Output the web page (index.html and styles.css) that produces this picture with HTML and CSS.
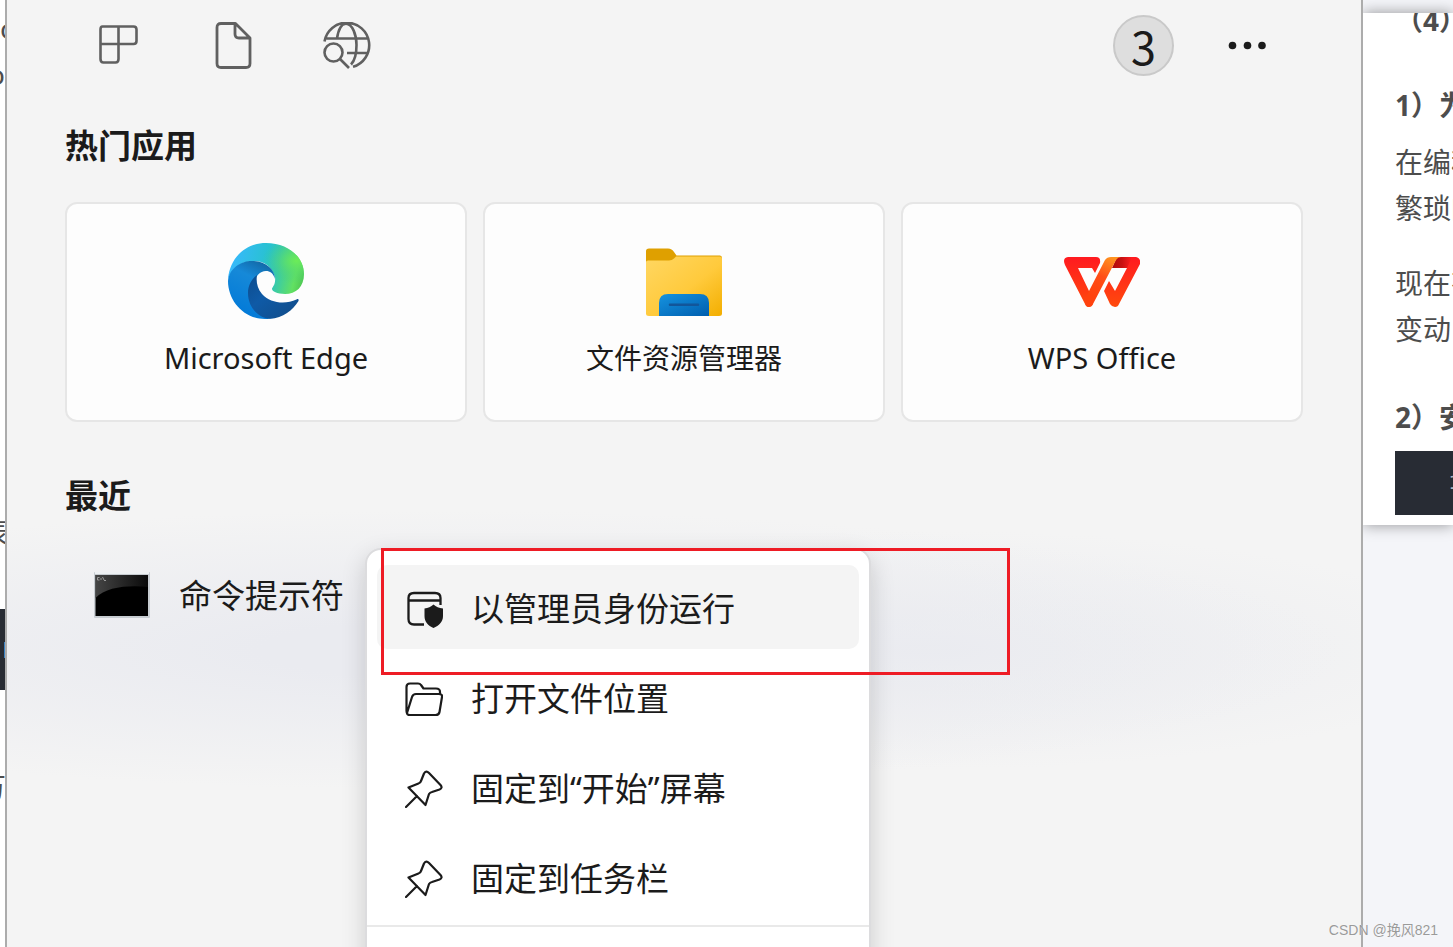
FILE: index.html
```html
<!DOCTYPE html>
<html lang="zh-CN">
<head>
<meta charset="utf-8">
<title>搜索</title>
<link rel="stylesheet" href="styles.css">
</head>
<body>
<div class="desktop">
  <aside class="back-left">
    <span class="frag frag-o">o</span>
    <span class="frag frag-p">o</span>
    <span class="frag frag-biao">表</span>
    <span class="frag-code"><i class="caret"></i></span>
    <span class="frag frag-wan">万</span>
  </aside>

  <main class="panel">
    <header class="topbar">
      <nav class="tabs">
        <button class="icon-btn" aria-label="应用">
          <svg width="48" height="48" viewBox="0 0 48 48" fill="none" stroke="#606060" stroke-width="2.6"><path d="M7.500 4.500H38.500Q41.500 4.500 41.500 7.500V19Q41.500 22 38.500 22H23.500V37Q23.500 40.500 20.500 40.500H8.500Q5.500 40.500 5.500 37V7.500Q5.500 4.500 7.500 4.500ZM23.500 4.500V22H5.500"/></svg>
        </button>
        <button class="icon-btn" aria-label="文档">
          <svg width="48" height="48" viewBox="0 0 48 48" fill="none" stroke="#606060" stroke-width="2.8" stroke-linejoin="round"><path d="M12 1.500H26.500L41 16V41.500Q41 45.500 37 45.500H12Q8 45.500 8 41.500V5.500Q8 1.500 12 1.500ZM26 1.500V12Q26 16 30 16H41"/></svg>
        </button>
        <button class="icon-btn" aria-label="网页">
          <svg width="48" height="48" viewBox="0 0 48 48" fill="none" stroke="#606060" stroke-width="2.6"><path d="M1.500 19.500A22.500 22.500 0 1 1 30 44.800M3.500 16.500H44.500M24 31H44.500M14 16.500C15.500 7 18.500 1.800 23 1.800C29.500 1.800 33.500 13 33.500 23C33.500 32 31.500 39 28 42.500"/><circle cx="10.500" cy="30.500" r="9"/><path d="M17 37L26 46"/></svg>
        </button>
      </nav>
      <div class="account">
        <button class="avatar">3</button>
        <button class="icon-btn" aria-label="更多">
          <svg width="48" height="48" viewBox="0 0 48 48" fill="#1b1b1b"><circle cx="8.500" cy="23.500" r="3.800"/><circle cx="23.500" cy="23.500" r="3.800"/><circle cx="38" cy="23.500" r="3.800"/></svg>
        </button>
      </div>
    </header>

    <h2 class="heading">热门应用</h2>
    <section class="cards">
      <button class="card latin">
        <svg width="76" height="76" viewBox="0 0 76 76">
          <defs>
            <linearGradient id="edgeTop" x1="0" y1=".4" x2="1" y2=".55"><stop offset="0" stop-color="#38b8ff"/><stop offset=".5" stop-color="#28c2cf"/><stop offset=".65" stop-color="#35c8b0"/><stop offset=".9" stop-color="#62e162"/><stop offset="1" stop-color="#52cc55"/></linearGradient>
            <linearGradient id="edgeMid" x1=".7" y1="0" x2=".3" y2="1"><stop offset="0" stop-color="#1268a6"/><stop offset=".3" stop-color="#1689d8"/><stop offset="1" stop-color="#0078d8"/></linearGradient>
            <linearGradient id="edgeLow" x1="0" y1="0" x2="1" y2="1"><stop offset="0" stop-color="#0d4c8d"/><stop offset=".4" stop-color="#0f5aa6"/><stop offset="1" stop-color="#114b87"/></linearGradient>
            <radialGradient id="edgeGreen" cx=".9" cy=".35" r=".45"><stop offset="0" stop-color="#6cec58"/><stop offset="1" stop-color="#45cc80" stop-opacity="0"/></radialGradient>
          </defs>
          <path fill="url(#edgeTop)" d="M0 36C2 14 18 0 38 0C60 0 76 14 76 31C76 44 68 51 57 51C49 51 44 48 44 46C44 44 48 42 47 34C44 22 34 17 24 18C12 19 4 26 0 36Z"/>
          <path fill="url(#edgeGreen)" d="M0 36C2 14 18 0 38 0C60 0 76 14 76 31C76 44 68 51 57 51C49 51 44 48 44 46C44 44 48 42 47 34C44 22 34 17 24 18C12 19 4 26 0 36Z"/>
          <path fill="url(#edgeMid)" d="M0 38C1 26 12 18 24 18C37 18 47 26 47 36C45 30 42 28 38 28C32 28 27 33 27 40C29 54 38 66 46 75C40 76 38 76 37 76C16 76 0 58 0 38Z"/>
          <path fill="url(#edgeLow)" d="M29 32C24 36 20 42 20 50C20 64 30 75 42 75.800C55 75 65 67 70.500 58C71 56 70 55.500 68.500 56.500C57 62 42 60 34 51C29 45 28 38 29 32Z"/>
        </svg>
        <span>Microsoft Edge</span>
      </button>
      <button class="card">
        <svg width="76" height="76" viewBox="0 0 76 76">
          <defs>
            <linearGradient id="folder" x1="0" y1="0" x2="1" y2="1"><stop offset="0" stop-color="#ffd762"/><stop offset=".55" stop-color="#ffca3c"/><stop offset="1" stop-color="#f3ae00"/></linearGradient>
            <linearGradient id="tray" x1="0" y1="0" x2="1" y2="1"><stop offset="0" stop-color="#1593e0"/><stop offset="1" stop-color="#005eae"/></linearGradient>
          </defs>
          <path fill="#dfa000" d="M0 8Q0 5.500 3 5.500H22Q26 5.500 28 9L30.500 12.500H74Q76 12.500 76 15V30H0Z"/>
          <path fill="url(#folder)" d="M0 19Q0 17.500 2 17.500H23Q26 17.500 28 15.500L30 13.500H74Q76 13.500 76 15.500V70.500Q76 73 73 73H3Q0 73 0 70.500Z"/>
          <path fill="url(#tray)" d="M13 73V60Q13 51 22 51H54Q63 51 63 60V73Z"/>
          <path stroke="#12569a" stroke-width="2.500" stroke-linecap="round" d="M24 61.700H52"/>
        </svg>
        <span>文件资源管理器</span>
      </button>
      <button class="card latin">
        <svg width="76" height="76" viewBox="0 0 76 76">
          <defs>
            <linearGradient id="wpsRed" x1="0" y1="0" x2="0" y2="1"><stop offset="0" stop-color="#ff1a20"/><stop offset="1" stop-color="#ff4a0c"/></linearGradient>
            <linearGradient id="wpsBand" gradientUnits="userSpaceOnUse" x1="48" y1="0" x2="30" y2="40"><stop offset="0" stop-color="#ff9420"/><stop offset=".5" stop-color="#ff4e16"/><stop offset="1" stop-color="#ff420e"/></linearGradient>
            <linearGradient id="wpsDark" x1="0" y1="0" x2="1" y2="0"><stop offset="0" stop-color="#ad0a0a"/><stop offset=".5" stop-color="#c81111"/><stop offset="1" stop-color="#ff1d20"/></linearGradient>
          </defs>
          <g transform="translate(0 14)">
            <path fill="url(#wpsRed)" d="M4 0H32Q37 0 36 6L31 16L28 11H14L25 34L29 47Q28 50 25 50Q22 50 21 47L1 8Q-2 1 4 0Z"/>
            <path fill="url(#wpsRed)" d="M55 0H72Q77 1 76 7L55 47Q54 50 51 50Q48 50 46 47L40 34L45 24L51 34L63 11H49Z"/>
            <path fill="url(#wpsDark)" d="M53 0H68L63 11H48Z"/>
            <path fill="url(#wpsBand)" d="M25 34L41 3Q43 0 47 0H57Q54 0 52 3L29 47Q27 50 25 50Q21 50 21 44Z"/>
          </g>
        </svg>
        <span>WPS Office</span>
      </button>
    </section>

    <h2 class="heading heading-recent">最近</h2>
    <section class="recent">
      <button class="recent-item">
        <svg width="56" height="48" viewBox="0 0 56 48">
          <defs><linearGradient id="shine" x1="0" y1="0" x2="1" y2="0"><stop offset="0" stop-color="#454545"/><stop offset="1" stop-color="#0a0a0a"/></linearGradient></defs>
          <rect x="0" y="0" width="56" height="46" rx="1" fill="#c7ccd1"/>
          <rect x="1" y="0" width="54" height="2" fill="#eef1f3"/>
          <rect x="1.500" y="3" width="52.500" height="41" fill="#000"/>
          <path fill="url(#shine)" d="M1.500 3H54V15C34 13 12 15 1.500 26Z"/>
          <path fill="none" stroke="#999" stroke-width="1" d="M5.500 5.500H3.500V8H5.500M7 6V8M8.500 5L10 8M10 8.500H12"/>
        </svg>
        <span>命令提示符</span>
      </button>

      <div class="menu" role="menu">
        <button class="menu-item active" role="menuitem">
          <svg width="38" height="38" viewBox="0 0 38 38" fill="none" stroke="#1b1b1b" stroke-width="2.300"><path d="M19 34.500H9Q3.500 34.500 3.500 29V8Q3.500 3 9 3H30Q35.500 3 35.500 8V15M3.500 10.500H35.500"/><path fill="#1b1b1b" stroke="none" d="M28.500 14.500C31 17 34 18 38 18.500V26C38 32 34 35.500 28.500 38C23 35.500 19.500 32 19.500 26V18.500C23 18 26 17 28.500 14.500Z"/></svg>
          <span>以管理员身份运行</span>
        </button>
        <button class="menu-item" role="menuitem">
          <svg width="38" height="38" viewBox="0 0 38 38" fill="none" stroke="#1b1b1b" stroke-width="2.200" stroke-linejoin="round"><path d="M2.500 34Q1.500 33 1.500 31V7Q1.500 3.500 5 3.500H13Q15 3.500 16 5L18.500 8.500H31Q35 8.500 35 12V14M2 33L7 17Q8 14 11 14H34Q37.500 14 37 17L34.500 32Q34 35 30.500 35H5Q2 35 2 33Z"/></svg>
          <span>打开文件位置</span>
        </button>
        <button class="menu-item" role="menuitem">
          <svg width="38" height="38" viewBox="0 0 38 38" fill="none" stroke="#1b1b1b" stroke-width="2.200" stroke-linejoin="round" stroke-linecap="round"><path d="M1 37L12 26M3.500 17.500L20.500 35L24 24Q25 22.500 27 22L34.500 19.500Q38 18 35.500 15L24 3Q21 0 19 3.500L16 11Q15.500 13 13.500 13.500Z"/></svg>
          <span>固定到“开始”屏幕</span>
        </button>
        <button class="menu-item" role="menuitem">
          <svg width="38" height="38" viewBox="0 0 38 38" fill="none" stroke="#1b1b1b" stroke-width="2.200" stroke-linejoin="round" stroke-linecap="round"><path d="M1 37L12 26M3.500 17.500L20.500 35L24 24Q25 22.500 27 22L34.500 19.500Q38 18 35.500 15L24 3Q21 0 19 3.500L16 11Q15.500 13 13.500 13.500Z"/></svg>
          <span>固定到任务栏</span>
        </button>
        <hr class="menu-line">
      </div>
      <div class="mark"></div>
    </section>
  </main>

  <aside class="back-right">
    <article class="article">
      <h3 class="art-first">（4）</h3>
      <h3>1）为</h3>
      <p>在编程</p>
      <p>繁琐的</p>
      <p class="para">现在有</p>
      <p>变动了</p>
      <h3 class="art-last">2）安</h3>
      <pre class="code">1</pre>
    </article>
  </aside>
  <div class="watermark">CSDN @挽风821</div>
</div>
</body>
</html>
```
FILE: styles.css
```css
* { box-sizing: border-box; }

body {
  margin: 0;
  font-family: "Noto Sans", "Noto Sans CJK SC", sans-serif;
  color: #1b1b1b;
}

button {
  font: inherit;
  color: inherit;
  background: none;
  border: 0;
  padding: 0;
}

svg { display: block; flex: none; }

.desktop {
  position: relative;
  display: flex;
  height: 100vh;
  overflow: hidden;
  background: #fff;
}

/* Window behind, left edge */
.back-left {
  display: flex;
  flex-direction: column;
  align-items: flex-end;
  flex: none;
  width: 5px;
  color: #4d4d4d;
  font-size: 28px;
  line-height: 40px;
}
.frag { white-space: nowrap; }
.frag-o { margin: 8px -12px 0 0; }
.frag-p { margin: 6px 0 0; }
.frag-biao { margin: 418px -3px 0 0; }
.frag-code {
  display: flex;
  justify-content: flex-end;
  align-items: center;
  width: 5px;
  height: 81px;
  margin-top: 57px;
  background: #282c34;
}
.caret { width: 1px; height: 16px; background: #3b82c4; }
.frag-wan { margin: 77px -1px 0 0; }

/* Search flyout */
.panel {
  position: relative;
  flex: 1;
  min-width: 0;
  padding: 15px 58px 0;
  border: solid #acacac;
  border-width: 0 2px;
  background:
    radial-gradient(ellipse 900px 140px at 32% 650px, #eaebf0 0%, #eaebf0 20%, rgba(234, 235, 240, 0) 100%),
    radial-gradient(ellipse 560px 120px at 68% 650px, #ebecf0 0%, rgba(235, 236, 240, 0) 100%),
    #f4f4f4;
}

.topbar {
  display: flex;
  justify-content: space-between;
  align-items: center;
  padding: 0 31px 0 30px;
}
.tabs { display: flex; gap: 66px; }
.account { display: flex; align-items: center; gap: 50px; }
.avatar {
  width: 61px;
  height: 61px;
  border: 2px solid #c9c9c9;
  border-radius: 50%;
  background: #dedede;
  font-size: 45px;
  line-height: 57px;
  font-family: "Noto Sans CJK SC", sans-serif;
}

.heading {
  margin: 48px 0 34px;
  font-size: 33px;
  line-height: 44px;
  font-weight: 700;
}
.heading-recent { margin: 52px 0 0; }

.cards {
  display: grid;
  grid-template-columns: repeat(3, 1fr);
  gap: 16px;
}
.card {
  display: flex;
  flex-direction: column;
  align-items: center;
  gap: 19px;
  padding: 39px 16px 42px;
  border: 2px solid #e6e6e6;
  border-radius: 12px;
  background: #fdfdfd;
  font-size: 28px;
  line-height: 40px;
}
.latin { font-size: 29px; }

.recent { position: relative; padding: 54px 29px 0; }
.recent-item {
  display: flex;
  align-items: center;
  gap: 29px;
  font-size: 33px;
  line-height: 48px;
}

/* Context menu of the recent item */
.menu {
  position: absolute;
  top: 30px;
  left: 300px;
  width: 506px;
  display: flex;
  flex-direction: column;
  gap: 6px;
  padding: 15px 10px 80px;
  border: 2px solid #dcdcde;
  border-radius: 16px;
  background: #fff;
  box-shadow: 0 8px 24px rgba(0, 0, 0, 0.16);
}
.menu-item {
  display: flex;
  align-items: center;
  gap: 28px;
  padding: 20px 28px 16px;
  border-radius: 10px;
  font-size: 33px;
  line-height: 48px;
}
.active { background: #f4f4f4; }
.menu-line {
  align-self: stretch;
  margin: 0 -10px;
  border: 0;
  border-top: 2px solid #e9e9e9;
}

.mark {
  position: absolute;
  top: 30px;
  left: 316px;
  width: 629px;
  height: 127px;
  border: 3px solid #ee1c25;
  pointer-events: none;
}

/* Window behind, right edge */
.back-right {
  flex: none;
  width: 90px;
  overflow: hidden;
  padding-top: 13px;
  background: #f4f5f9;
}
.article {
  padding: 0 0 10px 32px;
  background: #fff;
  color: #4d4d4d;
  font-size: 28px;
  line-height: 46px;
  white-space: nowrap;
  box-shadow: 0 0 14px rgba(0, 0, 0, 0.4);
}
.article h3,
.article p { margin: 0; font-size: inherit; }
.article h3 { margin-bottom: 11px; }
.article .art-first {
  display: flex;
  align-items: flex-end;
  height: 30px;
  margin-bottom: 39px;
  overflow: hidden;
}
.article .para { margin-top: 29px; }
.article .art-last { margin: 42px 0 11px; }
.code {
  margin: 0;
  padding: 9px 0 9px 54px;
  background: #282c34;
  color: #abb2bf;
  font: 24px/46px "Liberation Mono", monospace;
}

.watermark {
  position: absolute;
  right: 15px;
  bottom: 7px;
  color: #9a9a9a;
  font: 14px/20px "Liberation Sans", "Noto Sans CJK SC", sans-serif;
  text-shadow: 0 0 1px #fff;
}
```
